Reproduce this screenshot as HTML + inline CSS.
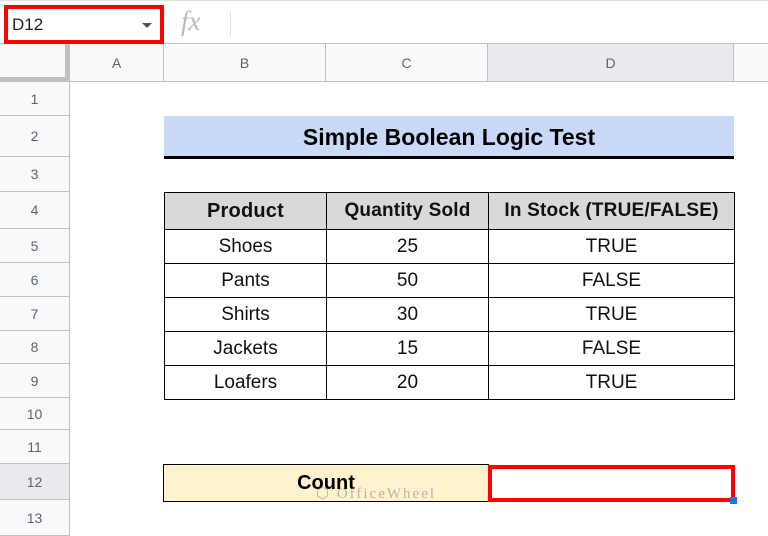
<!DOCTYPE html><html><head><style>
body{margin:0;width:768px;height:536px;overflow:hidden;background:#fff;font-family:"Liberation Sans",Arial,sans-serif;position:relative}
.a{position:absolute;box-sizing:border-box}
.ch{position:absolute;top:44px;height:38px;background:#f8f9fa;border-right:1px solid #c0c0c0;border-bottom:1px solid #c0c0c0;color:#5f6368;font-size:14px;text-align:center;line-height:38px;box-sizing:border-box}
.rh{position:absolute;left:0;width:70px;background:#f8f9fa;border-bottom:1px solid #c0c0c0;border-right:1px solid #c0c0c0;color:#5f6368;font-size:14px;text-align:center;box-sizing:border-box}
table{position:absolute;left:164px;top:192px;border-collapse:collapse;font-size:19px;color:#111}
td{border:1px solid #000;text-align:center;height:33px;padding:0}
.h td{background:#d9d9d9;font-weight:bold;font-size:19px;letter-spacing:0.2px}
</style></head><body>
<div class="a" style="left:0;top:0;width:768px;height:44px;border-top:1px solid #e0e0e0;border-bottom:1px solid #c0c0c0"></div>
<div class="a" style="left:4px;top:5px;width:160px;height:39px;border:4px solid #f00;font-size:17px;line-height:31px;padding-left:4px;color:#222">D12<span style="position:absolute;right:8px;top:14px;border-left:5px solid transparent;border-right:5px solid transparent;border-top:5px solid #555"></span></div>
<div class="a" style="left:181px;top:6px;font-family:'Liberation Serif',serif;font-style:italic;font-size:27px;color:#bbb">fx</div>
<div class="a" style="left:230px;top:12px;width:1px;height:24px;background:#ddd"></div>
<div class="ch" style="left:0;width:70px;border-right:5px solid #c0c0c0;border-bottom:5px solid #c0c0c0"></div>
<div class="ch" style="left:70px;width:94px">A</div>
<div class="ch" style="left:164px;width:162px">B</div>
<div class="ch" style="left:326px;width:162px">C</div>
<div class="ch" style="left:488px;width:246px;background:#e8eaed">D</div>
<div class="ch" style="left:734px;width:40px"></div>
<div class="rh" style="top:82px;height:34px;line-height:34px">1</div>
<div class="rh" style="top:116px;height:41px;line-height:41px">2</div>
<div class="rh" style="top:157px;height:35px;line-height:35px">3</div>
<div class="rh" style="top:192px;height:37px;line-height:37px">4</div>
<div class="rh" style="top:229px;height:34px;line-height:34px">5</div>
<div class="rh" style="top:263px;height:34px;line-height:34px">6</div>
<div class="rh" style="top:297px;height:34px;line-height:34px">7</div>
<div class="rh" style="top:331px;height:33px;line-height:33px">8</div>
<div class="rh" style="top:364px;height:34px;line-height:34px">9</div>
<div class="rh" style="top:398px;height:32px;line-height:32px">10</div>
<div class="rh" style="top:430px;height:34px;line-height:34px">11</div>
<div class="rh" style="top:464px;height:36px;line-height:36px;background:#e8eaed">12</div>
<div class="rh" style="top:500px;height:36px;line-height:36px">13</div>
<div class="a" style="left:164px;top:116px;width:570px;height:43px;background:#c9daf8;border-bottom:3px solid #000;text-align:center;font-weight:bold;font-size:23px;line-height:42px">Simple Boolean Logic Test</div>
<table>
<tr class="h" style="height:37px"><td style="width:161px;font-size:20px">Product</td><td style="width:161px">Quantity Sold</td><td style="width:245px">In Stock (TRUE/FALSE)</td></tr>
<tr><td>Shoes</td><td>25</td><td>TRUE</td></tr>
<tr><td>Pants</td><td>50</td><td>FALSE</td></tr>
<tr><td>Shirts</td><td>30</td><td>TRUE</td></tr>
<tr><td>Jackets</td><td>15</td><td>FALSE</td></tr>
<tr><td>Loafers</td><td>20</td><td>TRUE</td></tr>
</table>
<div class="a" style="left:163px;top:464px;width:326px;height:38px;background:#fff2cc;border:1px solid #000;text-align:center;font-weight:bold;font-size:20px;line-height:36px">Count</div>
<div class="a" style="left:488px;top:465px;width:247px;height:37px;border:4px solid #f00"></div>
<div class="a" style="left:730px;top:497px;width:7px;height:7px;background:#1a73e8"></div>
<div class="a" style="left:316px;top:484px;font-family:'Liberation Serif',serif;font-size:15px;letter-spacing:2px;color:#999;opacity:.7">⬡ OfficeWheel</div>
</body></html>
